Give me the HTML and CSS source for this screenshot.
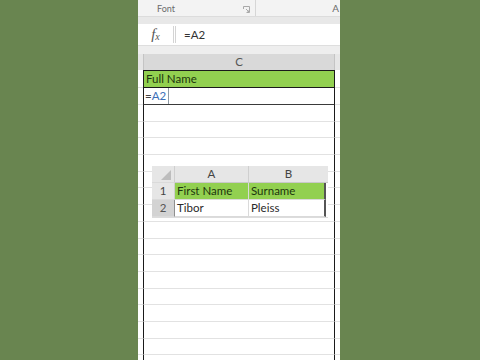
FILE: index.html
```html
<!DOCTYPE html>
<html lang="en">
<head>
    <meta charset="UTF-8">
    <title>Full Name formula</title>
    <link rel="stylesheet" href="styles.css">
</head>
<body>
    <div class="phone">
        <!-- ribbon strip, only the bottom of the Font group is visible -->
        <div class="ribbon">
            <div class="ribbon-group">
                <span class="group-label">Font</span>
                <svg class="launcher" width="7" height="7" viewBox="0 0 7 7">
                    <path d="M0.5 3V0.5H6.5V6.5H3.5" fill="none" stroke="#a9a9a9" stroke-width="1"/>
                    <path d="M3 3L6 6M4 6H6V4" fill="none" stroke="#a9a9a9" stroke-width="1"/>
                </svg>
            </div>
            <div class="ribbon-group next">A</div>
        </div>
        <div class="ribbon-edge"></div>

        <!-- formula bar -->
        <div class="formula-bar">
            <span class="fx">f<sub>x</sub></span>
            <span class="fbar-sep"></span>
            <span class="formula">=A2</span>
        </div>
        <div class="sheet-gap"></div>

        <!-- sheet, column C between two cut off columns -->
        <div class="sheet">
            <div class="row head">
                <div class="stub"></div>
                <div class="cell">C</div>
                <div class="stub"></div>
            </div>
            <div class="row title">
                <div class="stub"></div>
                <div class="cell">Full Name</div>
                <div class="stub"></div>
            </div>
            <div class="row editing">
                <div class="stub"></div>
                <div class="cell"><span class="edit-box">=<span class="ref">A2</span></span></div>
                <div class="stub"></div>
            </div>
            <div class="row"><div class="stub"></div><div class="cell"></div><div class="stub"></div></div>
            <div class="row"><div class="stub"></div><div class="cell"></div><div class="stub"></div></div>
            <div class="row"><div class="stub"></div><div class="cell"></div><div class="stub"></div></div>
            <div class="row"><div class="stub"></div><div class="cell"></div><div class="stub"></div></div>
            <div class="row"><div class="stub"></div><div class="cell"></div><div class="stub"></div></div>
            <div class="row"><div class="stub"></div><div class="cell"></div><div class="stub"></div></div>
            <div class="row"><div class="stub"></div><div class="cell"></div><div class="stub"></div></div>
            <div class="row"><div class="stub"></div><div class="cell"></div><div class="stub"></div></div>
            <div class="row"><div class="stub"></div><div class="cell"></div><div class="stub"></div></div>
            <div class="row"><div class="stub"></div><div class="cell"></div><div class="stub"></div></div>
            <div class="row"><div class="stub"></div><div class="cell"></div><div class="stub"></div></div>
            <div class="row"><div class="stub"></div><div class="cell"></div><div class="stub"></div></div>
            <div class="row"><div class="stub"></div><div class="cell"></div><div class="stub"></div></div>
            <div class="row"><div class="stub"></div><div class="cell"></div><div class="stub"></div></div>
            <div class="row"><div class="stub"></div><div class="cell"></div><div class="stub"></div></div>
            <div class="row"><div class="stub"></div><div class="cell"></div><div class="stub"></div></div>

            <!-- pasted picture of the source table, floats over the grid -->
            <div class="mini-table">
                <div class="mt-row mt-head">
                    <div class="mt-num corner">
                        <svg width="10" height="10" viewBox="0 0 10 10"><path d="M10 0V10H0Z" fill="#bdbdbd"/></svg>
                    </div>
                    <div class="mt-cell">A</div>
                    <div class="mt-cell last">B</div>
                </div>
                <div class="mt-row green">
                    <div class="mt-num">1</div>
                    <div class="mt-cell">First Name</div>
                    <div class="mt-cell last">Surname</div>
                </div>
                <div class="mt-row">
                    <div class="mt-num picked">2</div>
                    <div class="mt-cell">Tibor</div>
                    <div class="mt-cell last">Pleiss</div>
                </div>
            </div>
        </div>
    </div>
</body>
</html>
```

FILE: styles.css
```css
body { /*green frame around the phone capture*/
    margin: 0;
    height: 360px;
    overflow: hidden;
    background: #698550;
    font-family: Lato, "Open Sans", sans-serif;
}
.phone {
    width: 202px;
    height: 360px;
    margin-left: 138px;
    background: #fff;
    overflow: hidden;
}

/* ribbon */
.ribbon {
    display: flex;
    height: 16px;
    background: #f3f3f3;
    font-size: 9px;
    color: #6b6b6b;
}
.ribbon-group {
    display: flex;
    align-items: center;
    width: 117px;
    border-right: 1px solid #d6d6d6;
}
.group-label {
    margin-left: 19px;
    flex: 1;
}
.launcher {
    margin-right: 5px;
    margin-top: 3px;
}
.ribbon-group.next {
    flex: 1;
    border-right: none;
    justify-content: flex-end;
    font-size: 10px;
    margin-right: 1px;
}
.ribbon-edge {
    height: 7px;
    border-top: 1px solid #dcdcdc;
    background: #e8e8e8;
}

/* formula bar */
.formula-bar {
    display: flex;
    align-items: center;
    height: 21px;
    border-bottom: 1px solid #dedede;
}
.fx {
    width: 35px;
    text-align: center;
    font-family: "Liberation Serif", serif;
    font-style: italic;
    font-size: 15px;
    color: #555;
}
.fx sub {
    font-size: 10px;
    vertical-align: -1px;
}
.fbar-sep {
    width: 1px;
    height: 17px;
    border-left: 1px solid #d4d4d4;
    border-right: 1px solid #d4d4d4;
}
.formula {
    margin-left: 8px;
    font-size: 11.5px;
    color: #333;
}
.sheet-gap {
    height: 8px;
    background: #eeeeee;
}

/* sheet grid */
.sheet {
    position: relative;
}
.row {
    display: grid;
    grid-template-columns: 5px 1fr 5px;
    height: 16.7px;
}
.row .stub, .row .cell {
    box-sizing: border-box;
    border-bottom: 1px solid #e2e2e2;
}
.row .cell {
    border-left: 1px solid #1a1a1a;
    border-right: 1px solid #1a1a1a;
    font-size: 11.5px;
    line-height: 15px;
}
.row.head {
    height: 16px;
}
.row.head .stub {
    background: #e6e6e6;
    border-bottom: none;
}
.row.head .cell {
    background: #d9d9d9;
    border-left-color: #c4c4c4;
    border-right-color: #c4c4c4;
    border-bottom: none;
    text-align: center;
    color: #555;
}
.row.title {
    height: 18px;
}
.row.title .cell {
    background: #92d050;
    border: 1px solid #1a1a1a;
    padding-left: 2px;
    line-height: 16px;
    color: #1d350e;
}
.row.editing {
    height: 17px;
}
.row.editing .cell {
    border-bottom: 1px solid #3a3a3a;
}
.edit-box {
    display: inline-block;
    box-sizing: border-box;
    height: 16px;
    width: 25px;
    padding-left: 1px;
    border-right: 1px solid #8e9aa6;
    color: #444;
}
.ref {
    color: #3c6fb8;
}

/* floating copy of the source table */
.mini-table {
    position: absolute;
    left: 14px;
    top: 112px;
    width: 176px;
    background: #fff;
    border-bottom: 1px solid #dcdcdc;
    font-size: 11.5px;
}
.mt-row {
    display: grid;
    grid-template-columns: 23px 74px 79px;
    height: 17px;
    line-height: 16px;
}
.mt-row > div {
    box-sizing: border-box;
    border-bottom: 1px solid #dadada;
}
.mt-num {
    background: #e6e6e6;
    text-align: center;
    color: #444;
    border-right: 1px solid #cfcfcf;
}
.mt-num.corner {
    display: flex;
    align-items: flex-end;
    justify-content: flex-end;
    padding: 0 3px 2px 0;
}
.mt-num.picked {
    background: #d3d3d3;
    border-right: 1px solid #8f8f8f;
    color: #555;
}
.mt-cell {
    padding-left: 2px;
    color: #2a2a2a;
    border-right: 1px solid #dadada;
}
.mt-head .mt-cell {
    background: #e6e6e6;
    text-align: center;
    padding-left: 0;
    color: #444;
    border-right-color: #cfcfcf;
    border-bottom-color: #c9c9c9;
}
.mt-row.green .mt-cell {
    background: #92d050;
    color: #1d350e;
}
.mt-row .mt-cell.last {
    border-right: 2px solid #555;
    margin-right: 2px;
}
.mt-head .mt-cell.last {
    border-right: none;
    margin-right: 0;
}
```
